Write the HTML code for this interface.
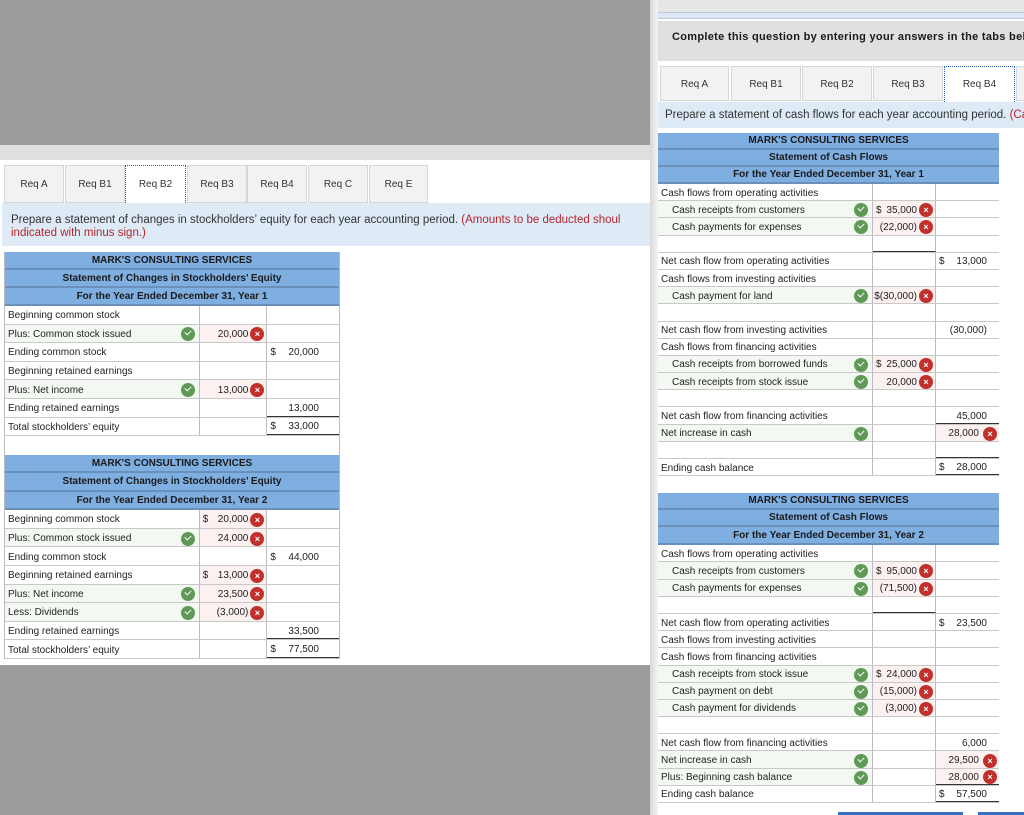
<!DOCTYPE html>
<html><head><style>
*{margin:0;padding:0;box-sizing:border-box}
body{width:1024px;height:815px;overflow:hidden;background:#9b9b9b;font-family:"Liberation Sans",Arial,sans-serif;position:relative;color:#222}
.lp{position:absolute;left:0;top:145px;width:650px;height:520px;background:#fff}
.lp .band{position:absolute;left:0;top:0;width:650px;height:15px;background:#e0e0e0}
.tab{position:absolute;height:38px;background:#f2f2f2;border:1px solid #d6d6d6;font-size:10px;text-align:center;line-height:38px;color:#333}
.tab.act{background:#fff;border:1px dotted #2a5fb8;border-bottom:none}
.ins{position:absolute;background:#deebf7;font-size:11.5px;color:#333;line-height:13px}
.ins span{color:#b3262b}
.t{position:absolute;font-size:10px}
.h{background:#7faee1;border-bottom:2px solid #6a8fb8;text-align:center;font-weight:bold;color:#1a1a1a;display:flex;align-items:center;justify-content:center}
.r{display:flex;border-bottom:1px solid #c8c8c8}
.r>div{position:relative;display:flex;align-items:center;height:100%;padding-top:2px}
.l{padding-left:3px;border-right:1px solid #bdbdbd}
.c1,.c2{border-right:1px solid #bdbdbd;justify-content:flex-end;padding-right:18px}
.c2{border-right:none;padding-right:20px}
.rt .c2{padding-right:12px}
.rt .c2.pk{padding-right:20px}
.g{background:#f4f8f2}
.pk{background:#fbf1f1}
.in{padding-left:14px!important}
.ok{position:absolute;right:4px;top:50%;margin-top:-6px;width:14px;height:14px;border-radius:50%;background:#5e9a56}
.ok:after{content:"";position:absolute;left:4px;top:3px;width:5px;height:3px;border-left:1.5px solid #fff;border-bottom:1.5px solid #fff;transform:rotate(-45deg)}
.x{position:absolute;right:2px;top:50%;margin-top:-6px;width:14px;height:14px;border-radius:50%;background:#c1302b;color:#fff;font-size:9px;font-weight:bold;text-align:center;line-height:14px}
.d{position:absolute;left:3px}
.ul{border-bottom:1.5px solid #333}
.rp{position:absolute;left:650px;top:0;width:374px;height:815px;background:#fff}
.rp .edge{position:absolute;left:0;top:0;width:8px;height:815px;background:linear-gradient(90deg,#d8d8d8,#f4f4f4)}
</style></head><body>
<div class="lp"><div class="band"></div>
<div class="tab" style="left:4px;top:20px;width:60px">Req A</div>
<div class="tab" style="left:65px;top:20px;width:60px">Req B1</div>
<div class="tab act" style="left:125px;top:20px;width:61px">Req B2</div>
<div class="tab" style="left:187px;top:20px;width:60px">Req B3</div>
<div class="tab" style="left:247px;top:20px;width:60px">Req B4</div>
<div class="tab" style="left:308px;top:20px;width:60px">Req C</div>
<div class="tab" style="left:369px;top:20px;width:59px">Req E</div>
<div class="ins" style="left:2px;top:58px;width:648px;height:43px;padding:11px 0 0 9px">Prepare a statement of changes in stockholders’ equity for each year accounting period. <span>(Amounts to be deducted shoul<br>indicated with minus sign.)</span></div>
</div>

<div class="t" style="left:4px;top:252px;width:336px;border-left:1px solid #bbb;border-right:1px solid #bbb">
<div class="h" style="height:18px">MARK'S CONSULTING SERVICES</div>
<div class="h" style="height:18px">Statement of Changes in Stockholders’ Equity</div>
<div class="h" style="height:18px">For the Year Ended December 31, Year 1</div>
<div class="r" style="height:18.6px"><div class="l" style="width:196px">Beginning common stock</div><div class="c1" style="width:68px"></div><div class="c2" style="width:72px"></div></div>
<div class="r g" style="height:18.6px"><div class="l" style="width:196px">Plus: Common stock issued<span class="ok"></span></div><div class="c1 pk" style="width:68px">20,000<span class="x">×</span></div><div class="c2" style="width:72px;background:#fff"></div></div>
<div class="r" style="height:18.6px"><div class="l" style="width:196px">Ending common stock</div><div class="c1" style="width:68px"></div><div class="c2" style="width:72px"><span class="d">$</span>20,000</div></div>
<div class="r" style="height:18.6px"><div class="l" style="width:196px">Beginning retained earnings</div><div class="c1" style="width:68px"></div><div class="c2" style="width:72px"></div></div>
<div class="r g" style="height:18.6px"><div class="l" style="width:196px">Plus: Net income<span class="ok"></span></div><div class="c1 pk" style="width:68px">13,000<span class="x">×</span></div><div class="c2" style="width:72px;background:#fff"></div></div>
<div class="r" style="height:18.6px"><div class="l" style="width:196px">Ending retained earnings</div><div class="c1" style="width:68px"></div><div class="c2 ul" style="width:72px">13,000</div></div>
<div class="r" style="height:18.6px"><div class="l" style="width:196px">Total stockholders’ equity</div><div class="c1" style="width:68px"></div><div class="c2 ul" style="width:72px"><span class="d">$</span>33,000</div></div>
<div style="height:19px"></div>
<div class="h" style="height:18px">MARK'S CONSULTING SERVICES</div>
<div class="h" style="height:19px">Statement of Changes in Stockholders’ Equity</div>
<div class="h" style="height:18px">For the Year Ended December 31, Year 2</div>
<div class="r" style="height:18.6px"><div class="l" style="width:196px">Beginning common stock</div><div class="c1 pk" style="width:68px"><span class="d">$</span>20,000<span class="x">×</span></div><div class="c2" style="width:72px"></div></div>
<div class="r g" style="height:18.6px"><div class="l" style="width:196px">Plus: Common stock issued<span class="ok"></span></div><div class="c1 pk" style="width:68px">24,000<span class="x">×</span></div><div class="c2" style="width:72px;background:#fff"></div></div>
<div class="r" style="height:18.6px"><div class="l" style="width:196px">Ending common stock</div><div class="c1" style="width:68px"></div><div class="c2" style="width:72px"><span class="d">$</span>44,000</div></div>
<div class="r" style="height:18.6px"><div class="l" style="width:196px">Beginning retained earnings</div><div class="c1 pk" style="width:68px"><span class="d">$</span>13,000<span class="x">×</span></div><div class="c2" style="width:72px"></div></div>
<div class="r g" style="height:18.6px"><div class="l" style="width:196px">Plus: Net income<span class="ok"></span></div><div class="c1 pk" style="width:68px">23,500<span class="x">×</span></div><div class="c2" style="width:72px;background:#fff"></div></div>
<div class="r g" style="height:18.6px"><div class="l" style="width:196px">Less: Dividends<span class="ok"></span></div><div class="c1 pk" style="width:68px">(3,000)<span class="x">×</span></div><div class="c2" style="width:72px;background:#fff"></div></div>
<div class="r" style="height:18.6px"><div class="l" style="width:196px">Ending retained earnings</div><div class="c1" style="width:68px"></div><div class="c2 ul" style="width:72px">33,500</div></div>
<div class="r" style="height:18.6px"><div class="l" style="width:196px">Total stockholders’ equity</div><div class="c1" style="width:68px"></div><div class="c2 ul" style="width:72px"><span class="d">$</span>77,500</div></div>
</div>

<div class="rp"><div class="edge"></div>
<div style="position:absolute;left:8px;top:0;width:366px;height:12px;background:#e6e6e6"></div>
<div style="position:absolute;left:8px;top:12px;width:366px;height:7px;background:#dce8f5;border-top:1px solid #b8c8d8;border-bottom:1px solid #b8c8d8"></div>
<div style="position:absolute;left:8px;top:21px;width:366px;height:40px;background:#e0e0e0;font-size:11px;font-weight:bold;padding:10px 0 0 14px;white-space:nowrap;overflow:hidden;letter-spacing:0.3px;color:#1a1a1a">Complete this question by entering your answers in the tabs belo</div>
</div>
<div class="tab" style="left:660px;top:66px;width:69px;height:35px;line-height:35px">Req A</div>
<div class="tab" style="left:731px;top:66px;width:70px;height:35px;line-height:35px">Req B1</div>
<div class="tab" style="left:802px;top:66px;width:70px;height:35px;line-height:35px">Req B2</div>
<div class="tab" style="left:873px;top:66px;width:70px;height:35px;line-height:35px">Req B3</div>
<div class="tab act" style="left:944px;top:66px;width:71px;height:36px;line-height:36px">Req B4</div>
<div class="tab" style="left:1016px;top:66px;width:20px;height:35px"></div>
<div class="ins" style="left:658px;top:102px;width:366px;height:26px;padding:7px 0 0 7px;white-space:nowrap;overflow:hidden">Prepare a statement of cash flows for each year accounting period. <span>(Cash</span></div>

<div class="t rt" style="left:658px;top:133px;width:341px">
<div class="h" style="height:17px">MARK'S CONSULTING SERVICES</div>
<div class="h" style="height:17px">Statement of Cash Flows</div>
<div class="h" style="height:17px">For the Year Ended December 31, Year 1</div>
<div class="r" style="height:17.2px"><div class="l" style="width:215px">Cash flows from operating activities</div><div class="c1" style="width:63px"></div><div class="c2" style="width:63px"></div></div>
<div class="r g" style="height:17.2px"><div class="l in" style="width:215px">Cash receipts from customers<span class="ok"></span></div><div class="c1 pk" style="width:63px"><span class="d">$</span>35,000<span class="x">×</span></div><div class="c2" style="width:63px;background:#fff"></div></div>
<div class="r g" style="height:17.2px"><div class="l in" style="width:215px">Cash payments for expenses<span class="ok"></span></div><div class="c1 pk" style="width:63px">(22,000)<span class="x">×</span></div><div class="c2" style="width:63px;background:#fff"></div></div>
<div class="r" style="height:17.2px"><div class="l" style="width:215px"></div><div class="c1 ul" style="width:63px"></div><div class="c2" style="width:63px"></div></div>
<div class="r" style="height:17.2px"><div class="l" style="width:215px">Net cash flow from operating activities</div><div class="c1" style="width:63px"></div><div class="c2" style="width:63px"><span class="d">$</span>13,000</div></div>
<div class="r" style="height:17.2px"><div class="l" style="width:215px">Cash flows from investing activities</div><div class="c1" style="width:63px"></div><div class="c2" style="width:63px"></div></div>
<div class="r g" style="height:17.2px"><div class="l in" style="width:215px">Cash payment for land<span class="ok"></span></div><div class="c1 pk" style="width:63px">$(30,000)<span class="x">×</span></div><div class="c2" style="width:63px;background:#fff"></div></div>
<div class="r" style="height:17.2px"><div class="l" style="width:215px"></div><div class="c1" style="width:63px"></div><div class="c2" style="width:63px"></div></div>
<div class="r" style="height:17.2px"><div class="l" style="width:215px">Net cash flow from investing activities</div><div class="c1" style="width:63px"></div><div class="c2" style="width:63px">(30,000)</div></div>
<div class="r" style="height:17.2px"><div class="l" style="width:215px">Cash flows from financing activities</div><div class="c1" style="width:63px"></div><div class="c2" style="width:63px"></div></div>
<div class="r g" style="height:17.2px"><div class="l in" style="width:215px">Cash receipts from borrowed funds<span class="ok"></span></div><div class="c1 pk" style="width:63px"><span class="d">$</span>25,000<span class="x">×</span></div><div class="c2" style="width:63px;background:#fff"></div></div>
<div class="r g" style="height:17.2px"><div class="l in" style="width:215px">Cash receipts from stock issue<span class="ok"></span></div><div class="c1 pk" style="width:63px">20,000<span class="x">×</span></div><div class="c2" style="width:63px;background:#fff"></div></div>
<div class="r" style="height:17.2px"><div class="l" style="width:215px"></div><div class="c1" style="width:63px"></div><div class="c2" style="width:63px"></div></div>
<div class="r" style="height:17.2px"><div class="l" style="width:215px">Net cash flow from financing activities</div><div class="c1" style="width:63px"></div><div class="c2 ul" style="width:63px">45,000</div></div>
<div class="r g" style="height:17.2px"><div class="l" style="width:215px">Net increase in cash<span class="ok"></span></div><div class="c1" style="width:63px;background:#fff"></div><div class="c2 pk" style="width:63px">28,000<span class="x">×</span></div></div>
<div class="r" style="height:17.2px"><div class="l" style="width:215px"></div><div class="c1" style="width:63px"></div><div class="c2 ul" style="width:63px"></div></div>
<div class="r" style="height:17.2px"><div class="l" style="width:215px">Ending cash balance</div><div class="c1" style="width:63px"></div><div class="c2 ul" style="width:63px"><span class="d">$</span>28,000</div></div>
<div style="height:17px"></div>
<div class="h" style="height:17px">MARK'S CONSULTING SERVICES</div>
<div class="h" style="height:17px">Statement of Cash Flows</div>
<div class="h" style="height:18px">For the Year Ended December 31, Year 2</div>
<div class="r" style="height:17.2px"><div class="l" style="width:215px">Cash flows from operating activities</div><div class="c1" style="width:63px"></div><div class="c2" style="width:63px"></div></div>
<div class="r g" style="height:17.2px"><div class="l in" style="width:215px">Cash receipts from customers<span class="ok"></span></div><div class="c1 pk" style="width:63px"><span class="d">$</span>95,000<span class="x">×</span></div><div class="c2" style="width:63px;background:#fff"></div></div>
<div class="r g" style="height:17.2px"><div class="l in" style="width:215px">Cash payments for expenses<span class="ok"></span></div><div class="c1 pk" style="width:63px">(71,500)<span class="x">×</span></div><div class="c2" style="width:63px;background:#fff"></div></div>
<div class="r" style="height:17.2px"><div class="l" style="width:215px"></div><div class="c1 ul" style="width:63px"></div><div class="c2" style="width:63px"></div></div>
<div class="r" style="height:17.2px"><div class="l" style="width:215px">Net cash flow from operating activities</div><div class="c1" style="width:63px"></div><div class="c2" style="width:63px"><span class="d">$</span>23,500</div></div>
<div class="r" style="height:17.2px"><div class="l" style="width:215px">Cash flows from investing activities</div><div class="c1" style="width:63px"></div><div class="c2" style="width:63px"></div></div>
<div class="r" style="height:17.2px"><div class="l" style="width:215px">Cash flows from financing activities</div><div class="c1" style="width:63px"></div><div class="c2" style="width:63px"></div></div>
<div class="r g" style="height:17.2px"><div class="l in" style="width:215px">Cash receipts from stock issue<span class="ok"></span></div><div class="c1 pk" style="width:63px"><span class="d">$</span>24,000<span class="x">×</span></div><div class="c2" style="width:63px;background:#fff"></div></div>
<div class="r g" style="height:17.2px"><div class="l in" style="width:215px">Cash payment on debt<span class="ok"></span></div><div class="c1 pk" style="width:63px">(15,000)<span class="x">×</span></div><div class="c2" style="width:63px;background:#fff"></div></div>
<div class="r g" style="height:17.2px"><div class="l in" style="width:215px">Cash payment for dividends<span class="ok"></span></div><div class="c1 pk" style="width:63px">(3,000)<span class="x">×</span></div><div class="c2" style="width:63px;background:#fff"></div></div>
<div class="r" style="height:17.2px"><div class="l" style="width:215px"></div><div class="c1" style="width:63px"></div><div class="c2" style="width:63px"></div></div>
<div class="r" style="height:17.2px"><div class="l" style="width:215px">Net cash flow from financing activities</div><div class="c1" style="width:63px"></div><div class="c2" style="width:63px">6,000</div></div>
<div class="r g" style="height:17.2px"><div class="l" style="width:215px">Net increase in cash<span class="ok"></span></div><div class="c1" style="width:63px;background:#fff"></div><div class="c2 pk" style="width:63px">29,500<span class="x">×</span></div></div>
<div class="r g" style="height:17.2px"><div class="l" style="width:215px">Plus: Beginning cash balance<span class="ok"></span></div><div class="c1" style="width:63px;background:#fff"></div><div class="c2 pk ul" style="width:63px">28,000<span class="x">×</span></div></div>
<div class="r" style="height:17.2px"><div class="l" style="width:215px">Ending cash balance</div><div class="c1" style="width:63px"></div><div class="c2 ul" style="width:63px"><span class="d">$</span>57,500</div></div>
</div>
<div style="position:absolute;left:838px;top:812px;width:125px;height:3px;background:#3b6fc4"></div>
<div style="position:absolute;left:978px;top:812px;width:46px;height:3px;background:#3b6fc4"></div>
</body></html>
